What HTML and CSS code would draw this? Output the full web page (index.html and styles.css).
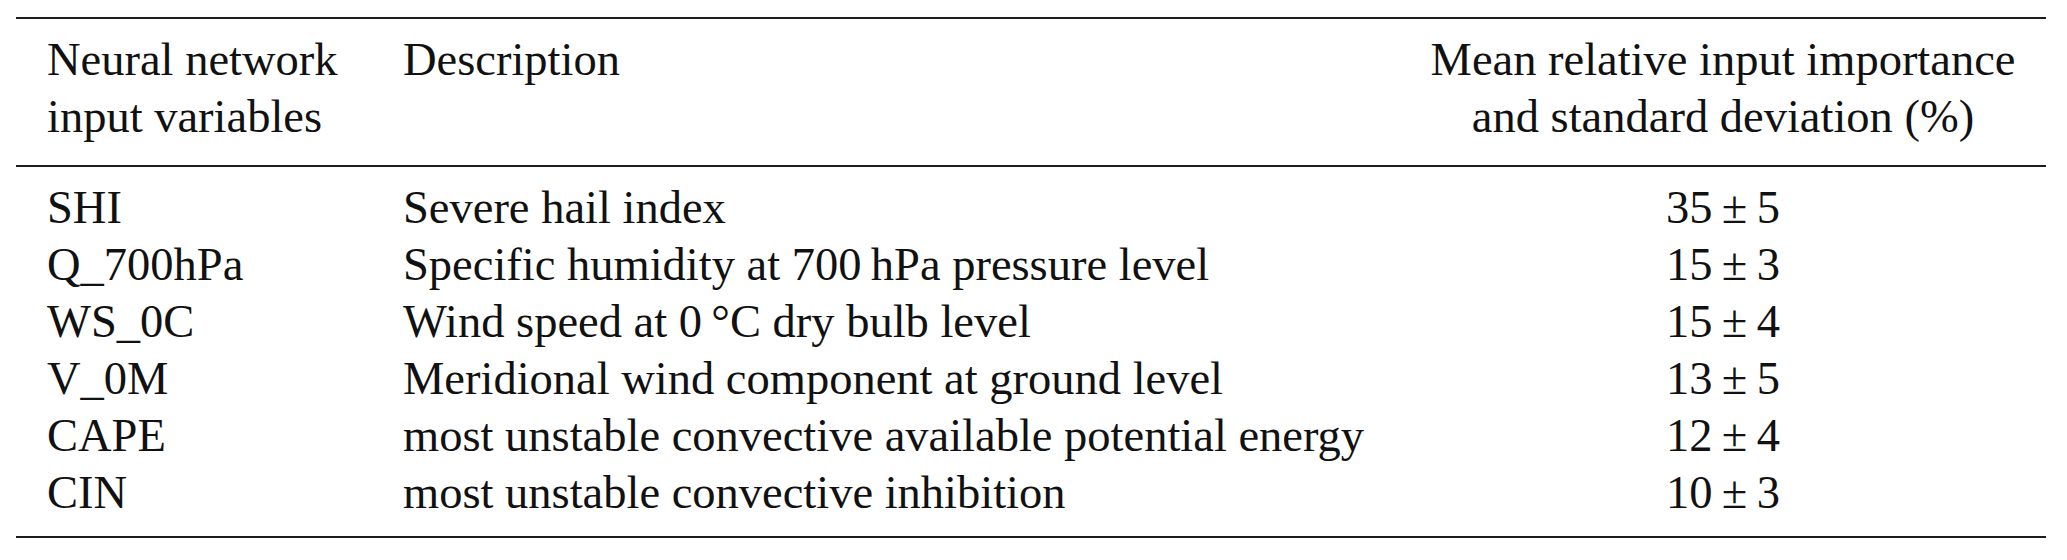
FILE: index.html
```html
<!DOCTYPE html>
<html lang="en">
<head>
<meta charset="utf-8">
<title>Neural network input variables</title>
<link rel="stylesheet" href="styles.css">
</head>
<body>
<div class="table">
  <div class="rule rule-top"></div>
  <div class="row head">
    <div class="c1">Neural network<br>input variables</div>
    <div class="c2">Description</div>
    <div class="c3">Mean relative input importance<br>and standard deviation (%)</div>
  </div>
  <div class="rule rule-mid"></div>
  <div class="body">
    <div class="row">
      <div class="c1">SHI</div>
      <div class="c2">Severe hail index</div>
      <div class="c3">35&#8201;±&#8201;5</div>
    </div>
    <div class="row">
      <div class="c1">Q_700hPa</div>
      <div class="c2">Specific humidity at 700&#8201;hPa pressure level</div>
      <div class="c3">15&#8201;±&#8201;3</div>
    </div>
    <div class="row">
      <div class="c1">WS_0C</div>
      <div class="c2">Wind speed at 0&#8201;°C dry bulb level</div>
      <div class="c3">15&#8201;±&#8201;4</div>
    </div>
    <div class="row">
      <div class="c1">V_0M</div>
      <div class="c2">Meridional wind component at ground level</div>
      <div class="c3">13&#8201;±&#8201;5</div>
    </div>
    <div class="row">
      <div class="c1">CAPE</div>
      <div class="c2">most unstable convective available potential energy</div>
      <div class="c3">12&#8201;±&#8201;4</div>
    </div>
    <div class="row">
      <div class="c1">CIN</div>
      <div class="c2">most unstable convective inhibition</div>
      <div class="c3">10&#8201;±&#8201;3</div>
    </div>
  </div>
  <div class="rule rule-bottom"></div>
</div>
</body>
</html>
```

FILE: styles.css
```css
html, body {
  margin: 0;
  padding: 0;
  background: #ffffff;
}

body {
  font-family: "Liberation Serif", "Times New Roman", serif;
  font-size: 46.5px;
  line-height: 57px;
  color: #111111;
}

.table {
  width: 2030px;
  margin-left: 16px;
  padding-top: 17px;
}

.rule {
  height: 2px;
  background: #1c1c1c;
}

.row {
  display: grid;
  grid-template-columns: 356px 1fr 646px;
  padding-left: 31px;
}

.head {
  padding-top: 12px;
  padding-bottom: 20px;
}

.body {
  padding-top: 12px;
  padding-bottom: 15px;
}

.c3 {
  text-align: center;
}
```
